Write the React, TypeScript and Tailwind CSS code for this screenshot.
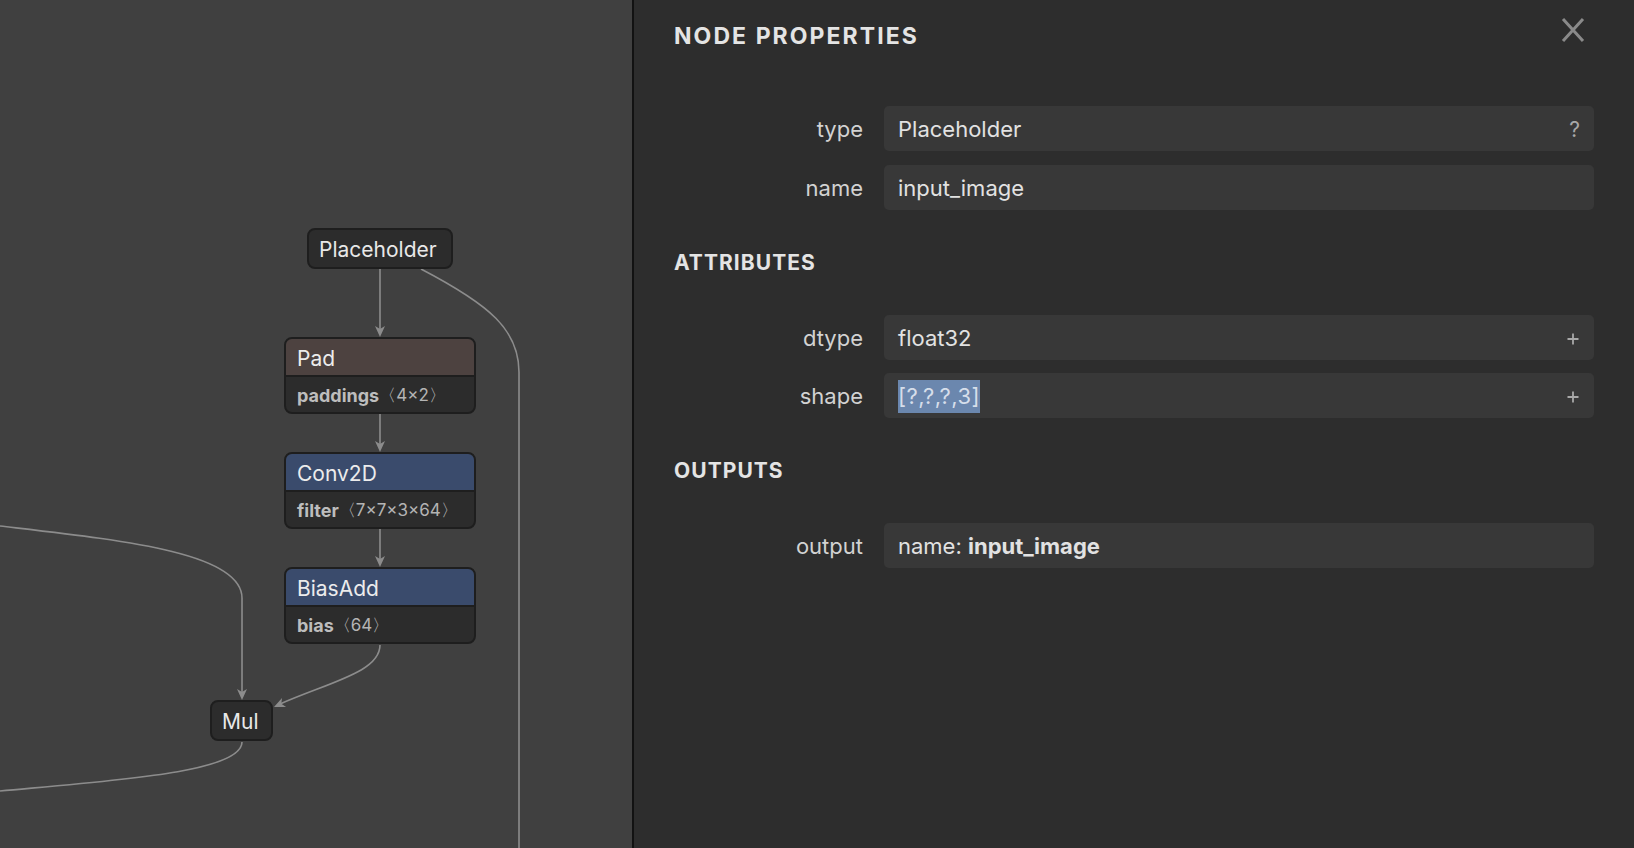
import React from "react";

const font = { fontFamily: "Inter, 'Noto Sans', sans-serif" };

type GraphNode = {
  id: string;
  title: string;
  x: number;
  y: number;
  w: number;
  header?: string;
  attr?: { key: string; value: string };
};

const nodes: GraphNode[] = [
  { id: "placeholder", title: "Placeholder", x: 307, y: 228, w: 146 },
  { id: "pad", title: "Pad", x: 284, y: 337, w: 192, header: "bg-[#4d4240]", attr: { key: "paddings", value: "〈4×2〉" } },
  { id: "conv", title: "Conv2D", x: 284, y: 452, w: 192, header: "bg-[#3a4b6c]", attr: { key: "filter", value: "〈7×7×3×64〉" } },
  { id: "bias", title: "BiasAdd", x: 284, y: 567, w: 192, header: "bg-[#3a4b6c]", attr: { key: "bias", value: "〈64〉" } },
  { id: "mul", title: "Mul", x: 210, y: 700, w: 63 },
];

function NodeBox({ node }: { node: GraphNode }) {
  if (!node.attr) {
    return (
      <div
        className="absolute flex h-[41px] items-center rounded-[8px] border-2 border-[#1e1e1e] bg-[#2c2c2c] px-[10px] pt-[2px] text-[21px] text-[#e8e8e8]"
        style={{ left: node.x, top: node.y, width: node.w }}
      >
        {node.title}
      </div>
    );
  }
  return (
    <div
      className="absolute overflow-hidden rounded-[8px] border-2 border-[#1e1e1e] bg-[#2c2c2c]"
      style={{ left: node.x, top: node.y, width: node.w }}
    >
      <div className={`flex h-[38px] items-center border-b-2 border-[#1e1e1e] px-[11px] pt-[4px] text-[21px] text-[#ececec] ${node.header}`}>
        {node.title}
      </div>
      <div className="flex h-[35px] items-center whitespace-nowrap px-[11px] pt-[2px] text-[18px] text-[#b4b4b4]">
        <span className="font-bold text-[#bdbdbd]">{node.attr.key}</span>
        <span className="text-[17px]">{node.attr.value}</span>
      </div>
    </div>
  );
}

function Arrow({ x, y, angle }: { x: number; y: number; angle: number }) {
  return (
    <path
      d="M0 0 L-5 -11 L0 -8 L5 -11 Z"
      fill="#8c8c8c"
      transform={`translate(${x} ${y}) rotate(${angle})`}
    />
  );
}

function GraphCanvas() {
  return (
    <div className="relative h-full w-[632px] shrink-0 overflow-hidden bg-[#404040]">
      <svg className="absolute inset-0" width="632" height="848">
        <g stroke="#8c8c8c" strokeWidth="1.6" fill="none">
          <path d="M380 269 L380 330" />
          <path d="M380 414 L380 445" />
          <path d="M380 529 L380 560" />
          <path d="M421 269 C 490 305, 519 330, 519 372 L519 848" />
          <path d="M0 526 C 120 540, 242 552, 242 598 L242 693" />
          <path d="M380 645 C 380 672, 330 682, 280 704" />
          <path d="M242 742 C 242 772, 120 780, 0 791" />
        </g>
        <Arrow x={380} y={337} angle={0} />
        <Arrow x={380} y={452} angle={0} />
        <Arrow x={380} y={567} angle={0} />
        <Arrow x={242} y={700} angle={0} />
        <Arrow x={274} y={707} angle={66} />
      </svg>
      {nodes.map((n) => (
        <NodeBox key={n.id} node={n} />
      ))}
    </div>
  );
}

function PlusIcon() {
  return (
    <svg width="14" height="14" viewBox="0 0 14 14" className="shrink-0">
      <path d="M7 1.5 V12.5 M1.5 7 H12.5" stroke="#a8a8a8" strokeWidth="1.8" />
    </svg>
  );
}

function Row({ label, children, trailing }: { label: string; children: React.ReactNode; trailing?: React.ReactNode }) {
  return (
    <div className="flex items-center">
      <div className="w-[189px] shrink-0 pt-[1px] text-right text-[22px] text-[#d2d2d2]">{label}</div>
      <div className="ml-[21px] flex h-[45px] flex-1 items-center justify-between rounded-[5px] bg-[#383838] pl-[14px] pr-[14px] pt-[2px] text-[22px] text-[#e2e2e2]">
        <div className="flex items-center">{children}</div>
        {trailing}
      </div>
    </div>
  );
}

function SectionTitle({ children }: { children: React.ReactNode }) {
  return (
    <div className="mb-[37px] mt-[38px] h-[30px] text-[21px] font-bold leading-[30px] tracking-[0.05em] text-[#e4e4e4]">
      {children}
    </div>
  );
}

function PropertiesPanel() {
  return (
    <div className="h-full flex-1 border-l-2 border-[#121212] bg-[#2d2d2d] px-[40px]">
      <div className="flex h-[70px] items-center justify-between">
        <h1 className="pt-[2px] text-[23px] font-bold tracking-[0.09em] text-[#e4e4e4]">NODE PROPERTIES</h1>
        <svg width="24" height="26" viewBox="0 0 24 26" className="mr-[9px] mt-[-10px]">
          <path d="M2 2 L22 24 M22 2 L2 24" stroke="#8a8a8a" strokeWidth="3" />
        </svg>
      </div>
      <div className="mt-[36px] flex flex-col gap-[14px]">
        <Row label="type" trailing={<span className="text-[21px] text-[#a8a8a8]">?</span>}>
          Placeholder
        </Row>
        <Row label="name">input_image</Row>
      </div>
      <SectionTitle>ATTRIBUTES</SectionTitle>
      <div className="flex flex-col gap-[13px]">
        <Row label="dtype" trailing={<PlusIcon />}>
          float32
        </Row>
        <Row label="shape" trailing={<PlusIcon />}>
          <span className="bg-[#6b87ae] tracking-[0.02em] text-[#d6deea]">[?,?,?,3]</span>
        </Row>
      </div>
      <SectionTitle>OUTPUTS</SectionTitle>
      <Row label="output">
        <span>
          name: <span className="font-bold">input_image</span>
        </span>
      </Row>
    </div>
  );
}

export default function App() {
  return (
    <div className="flex h-[848px] w-[1634px] overflow-hidden" style={font}>
      <GraphCanvas />
      <PropertiesPanel />
    </div>
  );
}
